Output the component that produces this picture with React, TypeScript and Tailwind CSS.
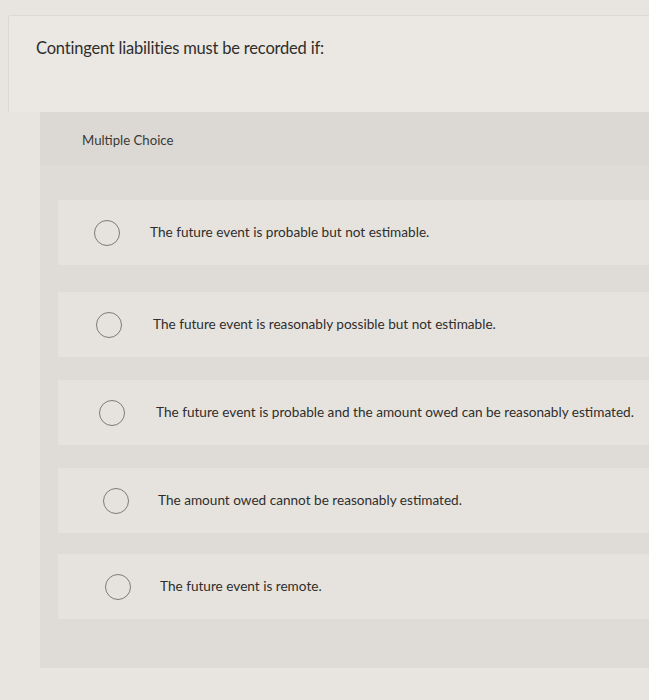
import React from 'react';

const options = [
  { text: 'The future event is probable but not estimable.', pad: 'pl-[36px]', gap: 'gap-[30px]', mt: 'mt-[35px]' },
  { text: 'The future event is reasonably possible but not estimable.', pad: 'pl-[38px]', gap: 'gap-[31px]', mt: 'mt-[27px]' },
  { text: 'The future event is probable and the amount owed can be reasonably estimated.', pad: 'pl-[41px]', gap: 'gap-[31px]', mt: 'mt-[23px]' },
  { text: 'The amount owed cannot be reasonably estimated.', pad: 'pl-[45px]', gap: 'gap-[29px]', mt: 'mt-[23px]' },
  { text: 'The future event is remote.', pad: 'pl-[47px]', gap: 'gap-[29px]', mt: 'mt-[21px]' },
];

const Radio = () => (
  <div className="w-[26px] h-[26px] rounded-full border-[1.5px] border-[#7d7b78] shrink-0" />
);

export default function App() {
  return (
    <div
      className="w-[649px] h-[700px] bg-[#e8e5e0] overflow-hidden text-[#333230]"
      style={{ fontFamily: 'Lato, "Open Sans", sans-serif' }}
    >
      {/* question card */}
      <div className="ml-[8px] mt-[15px] h-[97px] bg-[#ebe8e3] border-l border-t border-[#dcd9d4] rounded-tl-[3px] pl-[27px] pt-[20px]">
        <p className="text-[16.5px] tracking-[-0.2px] text-[#2f2e2c]">Contingent liabilities must be recorded if:</p>
      </div>

      {/* answer panel */}
      <div className="ml-[40px] h-[556px] bg-[#dfdcd7] flex flex-col">
        <div className="h-[53px] pl-[42px] pt-[19px] text-[13.2px] text-[#3a3936] bg-[#dcd9d4]">Multiple Choice</div>
        <div className="flex flex-col pl-[18px]">
          {options.map((o, i) => (
            <div
              key={i}
              className={`h-[65px] bg-[#e6e3de] flex items-center ${o.mt} ${o.pad} ${o.gap}`}
            >
              <Radio />
              <span className="text-[13.6px] text-[#2f2e2c]">{o.text}</span>
            </div>
          ))}
        </div>
      </div>
    </div>
  );
}
